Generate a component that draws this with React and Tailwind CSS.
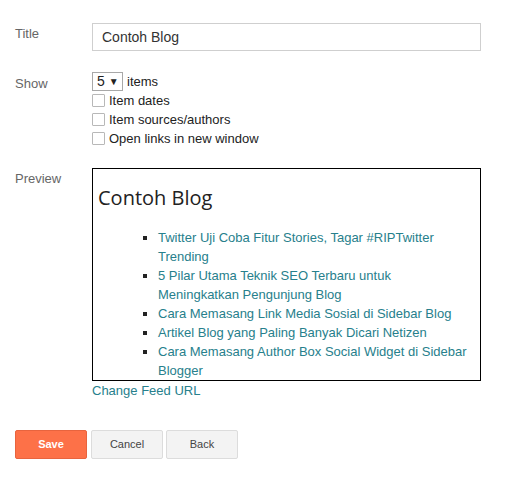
import React from "react";

const posts = [
  "Twitter Uji Coba Fitur Stories, Tagar #RIPTwitter Trending",
  "5 Pilar Utama Teknik SEO Terbaru untuk Meningkatkan Pengunjung Blog",
  "Cara Memasang Link Media Sosial di Sidebar Blog",
  "Artikel Blog yang Paling Banyak Dicari Netizen",
  "Cara Memasang Author Box Social Widget di Sidebar Blogger",
];

function Check({ label }) {
  return (
    <label className="flex items-center h-[19px] text-[13px] text-[#222]">
      <span className="w-[13px] h-[13px] border border-[#b8b8b8] bg-white rounded-[1px] mr-[4px]" />
      {label}
    </label>
  );
}

export default function App() {
  return (
    <div className="bg-white min-h-screen pl-[15px] pt-[23px] font-['Liberation_Sans',Arial,sans-serif]">
      <div className="flex">
        <div className="w-[77px] pt-[3px] text-[13px] leading-[16px] text-[#666]">Title</div>
        <div className="w-[389px] h-[28px] border border-[#cfcfcf] flex items-center px-[9px] text-[14px] text-[#333]">
          Contoh Blog
        </div>
      </div>

      <div className="flex mt-[21px]">
        <div className="w-[77px] pt-[4px] text-[13px] leading-[16px] text-[#666]">Show</div>
        <div className="flex flex-col">
          <div className="flex items-center h-[19px] text-[13px] text-[#222]">
            <span className="flex items-center w-[31px] h-[19px] border border-[#a8a8a8] pl-[4px] text-[14px]">
              5<span className="ml-[4px] text-[10px]">▼</span>
            </span>
            <span className="ml-[4px]">items</span>
          </div>
          <Check label="Item dates" />
          <Check label="Item sources/authors" />
          <Check label="Open links in new window" />
        </div>
      </div>

      <div className="flex mt-[20px]">
        <div className="w-[77px] pt-[3px] text-[13px] leading-[16px] text-[#666]">Preview</div>
        <div className="flex flex-col">
          <div className="w-[389px] h-[213px] border border-black pl-[5px] pr-[9px] pt-[15px]">
            <div className="font-['Open_Sans',sans-serif] text-[20px] leading-[27px] text-[#222]">Contoh Blog</div>
            <ul className="list-[square] ml-[60px] mt-[17px] text-[13px] leading-[19px] text-[#222]">
              {posts.map((p) => (
                <li key={p}>
                  <a className="text-[#27808c]">{p}</a>
                </li>
              ))}
            </ul>
          </div>
          <a className="text-[13px] leading-[19px] text-[#27808c]">Change Feed URL</a>
        </div>
      </div>

      <div className="flex mt-[30px]">
        <button className="w-[72px] h-[29px] rounded-[2px] bg-[#fd7148] border border-[#e8643e] text-white text-[11px] font-bold">
          Save
        </button>
        <button className="ml-[4px] w-[72px] h-[29px] rounded-[2px] bg-[#f3f3f3] border border-[#dcdcdc] text-[#444] text-[11px]">
          Cancel
        </button>
        <button className="ml-[3px] w-[72px] h-[29px] rounded-[2px] bg-[#f3f3f3] border border-[#dcdcdc] text-[#444] text-[11px]">
          Back
        </button>
      </div>
    </div>
  );
}
